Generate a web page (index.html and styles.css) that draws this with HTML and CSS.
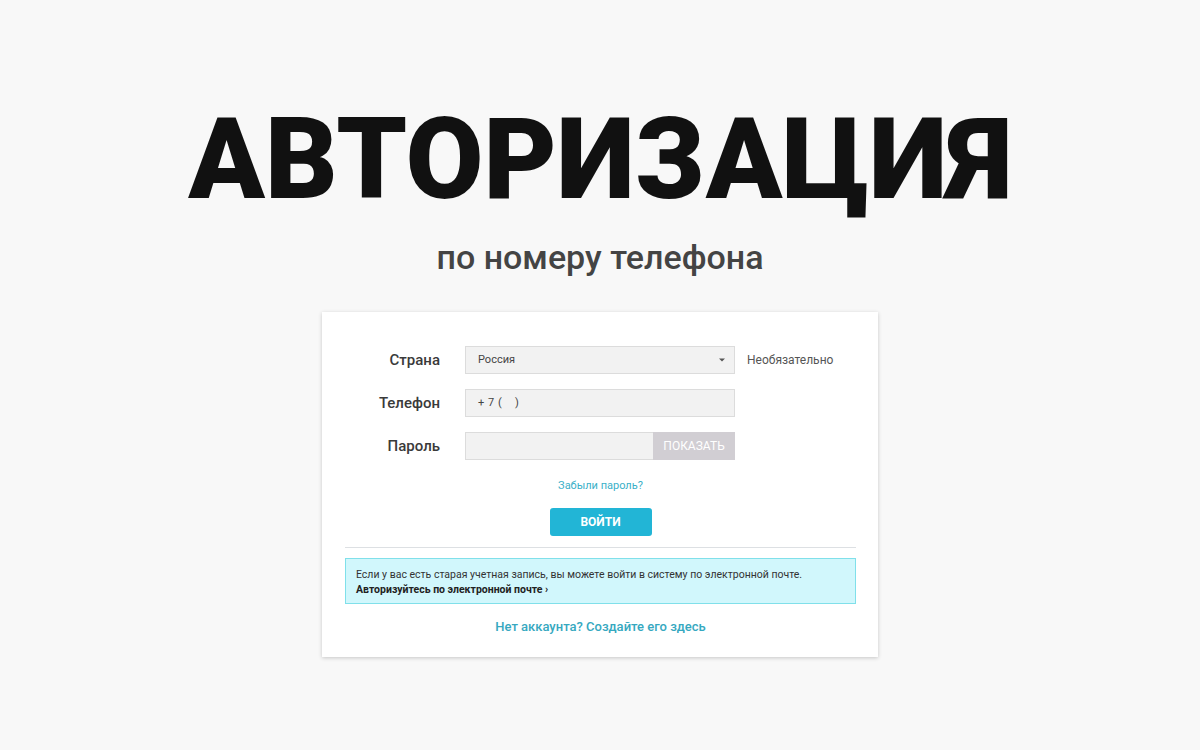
FILE: index.html
```html
<!DOCTYPE html>
<html lang="ru">
<head>
<meta charset="utf-8">
<link rel="stylesheet" href="styles.css">
</head>
<body>
<div class="page">
  <h1 class="title">АВТОРИЗАЦИЯ</h1>
  <p class="subtitle">по номеру телефона</p>
  <div class="card">
    <div class="rows">
      <div class="row">
        <label class="label">Страна</label>
        <div class="field select">
          <span>Россия</span>
          <svg class="caret" width="8" height="4" viewBox="0 0 8 4"><path d="M1 0.5h6L4 3.5z" fill="#555"/></svg>
        </div>
        <span class="note">Необязательно</span>
      </div>
      <div class="row">
        <label class="label">Телефон</label>
        <div class="field"><span class="phone">+ 7 (&nbsp;&nbsp;&nbsp;&nbsp;)</span></div>
      </div>
      <div class="row">
        <label class="label">Пароль</label>
        <div class="field pass">
          <span class="show">ПОКАЗАТЬ</span>
        </div>
      </div>
    </div>
    <a class="forgot">Забыли пароль?</a>
    <div class="btnwrap"><button class="login">ВОЙТИ</button></div>
    <hr class="divider">
    <div class="info">
      Если у вас есть старая учетная запись, вы можете войти в систему по электронной почте.<br>
      <b>Авторизуйтесь по электронной почте ›</b>
    </div>
    <a class="signup">Нет аккаунта? Создайте его здесь</a>
  </div>
</div>
</body>
</html>
```
FILE: styles.css
```css
html, body {
  margin: 0;
  padding: 0;
  background: #f8f8f8;
  font-family: Roboto, "Noto Sans", sans-serif;
  width: 1200px;
  height: 750px;
  overflow: hidden;
}
.page {
  display: flex;
  flex-direction: column;
  align-items: center;
}
.title {
  margin: 104px 0 0 0;
  font-size: 112.6px;
  line-height: 1;
  font-weight: 900;
  color: #111;
}
.subtitle {
  margin: 20px 0 0 0;
  font-size: 34px;
  line-height: 40px;
  font-weight: 500;
  color: #444;
}
.card {
  margin-top: 35px;
  width: 511px;
  padding: 34px 22px 22px 23px;
  background: #fff;
  box-shadow: 0 1px 4px rgba(0,0,0,0.2);
  display: flex;
  flex-direction: column;
}
.rows {
  display: flex;
  flex-direction: column;
  gap: 15px;
}
.row {
  display: flex;
  align-items: center;
  height: 28px;
}
.label {
  width: 95px;
  text-align: right;
  font-size: 15px;
  font-weight: 500;
  color: #3a3a3a;
  margin-right: 25px;
}
.field {
  box-sizing: border-box;
  width: 270px;
  height: 28px;
  background: #f2f2f2;
  border: 1px solid #dcdcdc;
  display: flex;
  align-items: center;
  padding: 0 12px;
  font-size: 11px;
  color: #444;
}
.select { justify-content: space-between; padding-right: 8px; }
.caret { display: block; }
.phone { letter-spacing: 0.5px; }
.pass { justify-content: flex-end; padding: 0; }
.show {
  width: 82px;
  height: 28px;
  margin: -1px -1px -1px 0;
  background: #d1ced3;
  color: #fff;
  font-size: 12px;
  display: flex;
  align-items: center;
  justify-content: center;
}
.note {
  margin-left: 12px;
  font-size: 12px;
  color: #555;
}
.forgot {
  margin-top: 18px;
  text-align: center;
  font-size: 11px;
  line-height: 16px;
  color: #3ab0c8;
}
.btnwrap {
  display: flex;
  justify-content: center;
  margin-top: 14px;
}
.login {
  width: 102px;
  height: 28px;
  border: none;
  border-radius: 3px;
  background: #22b5d6;
  color: #fff;
  font-family: Roboto, sans-serif;
  font-weight: 700;
  font-size: 12px;
  padding: 0;
}
.divider {
  margin: 11px 0 0 0;
  border: none;
  border-top: 1px solid #dde0e3;
  height: 0;
}
.info {
  margin-top: 10px;
  background: #d1f7fc;
  border: 1px solid #80e0ea;
  padding: 8px 10px 6px 10px;
  font-size: 10.5px;
  line-height: 15px;
  color: #333;
}
.info b { font-weight: 700; color: #222; }
.signup {
  margin-top: 15px;
  text-align: center;
  font-size: 13px;
  line-height: 16px;
  font-weight: 500;
  color: #36a8c0;
}
```
